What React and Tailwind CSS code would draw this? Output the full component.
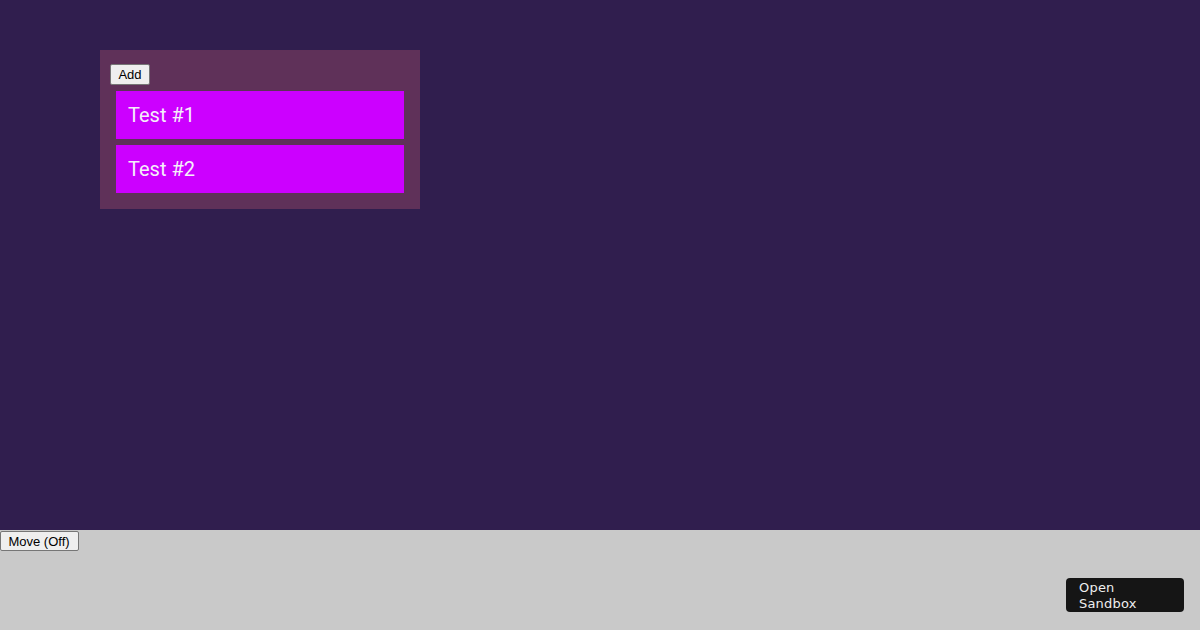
export default function App() {
  const btn =
    "bg-[#efefef] border border-[#767676] rounded-[2px] text-[13px] leading-[15px] text-black px-[6px] py-[2px] font-['Liberation_Sans',Arial,sans-serif]";
  return (
    <div className="w-[1200px] h-[630px] flex flex-col overflow-hidden">
      <div className="h-[530px] bg-[#301e4e] pt-[50px] pl-[100px]">
        <div className="w-[320px] h-[159px] bg-[#5f3159] pt-[14px] pl-[10px] pr-[16px]">
          <button className={`${btn} w-[40px] h-[21px] flex items-center justify-center`}>Add</button>
          <div className="flex flex-col gap-[6px] mt-[6px] ml-[6px]">
            {["Test #1", "Test #2"].map((t) => (
              <div
                key={t}
                className="h-[48px] bg-[#cc00ff] flex items-center pl-[12px] text-[20px] text-[#f5eefa] font-['Roboto',sans-serif]"
              >
                {t}
              </div>
            ))}
          </div>
        </div>
      </div>
      <div className="h-[100px] bg-[#c9c9c9] relative">
        <button className={`${btn} mt-px w-[79px] h-[20px] flex items-center justify-center pr-[7px]`}>Move (Off)</button>
        <div className="absolute left-[1066px] top-[48px] w-[118px] h-[34px] bg-[#151515] rounded-[4px] pl-[13px] pt-[2px] text-[13px] leading-[16px] text-[#eeeeee] font-['DejaVu_Sans',sans-serif] tracking-[0.2px]">
          Open
          <br />
          Sandbox
        </div>
      </div>
    </div>
  );
}
